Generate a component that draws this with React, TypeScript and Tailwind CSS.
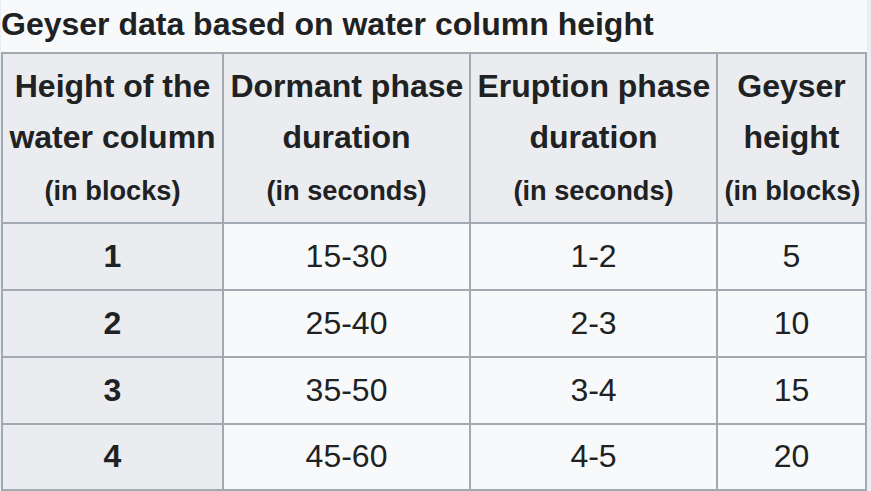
import React from "react";

type Row = { height: string; dormant: string; eruption: string; geyser: string; rowClass: string };

const rows: Row[] = [
  { height: "1", dormant: "15-30", eruption: "1-2", geyser: "5", rowClass: "h-[67px]" },
  { height: "2", dormant: "25-40", eruption: "2-3", geyser: "10", rowClass: "h-[67px]" },
  { height: "3", dormant: "35-50", eruption: "3-4", geyser: "15", rowClass: "h-[66.5px]" },
  { height: "4", dormant: "45-60", eruption: "4-5", geyser: "20", rowClass: "h-[66.5px]" },
];

const cell = "border-2 border-[#a2a9b1] p-[6.4px] text-center";
const head = `${cell} bg-[#eaecf0] font-bold whitespace-nowrap`;

export default function App() {
  return (
    <div className="flex h-[491px] w-[871px] overflow-hidden bg-[#e9f0f5] font-['Liberation_Sans',Arial,sans-serif] text-[#202122]">
      <div className="ml-px w-[866px] bg-[#f8f9fa]">
        <table className="w-[866px] table-fixed border-collapse border-2 border-[#a2a9b1] text-[32px] leading-[1.6]">
          <caption className="pb-[4px] text-left font-bold leading-[48px] whitespace-nowrap">
            Geyser data based on water column height
          </caption>
          <colgroup>
            <col className="w-[221px]" />
            <col className="w-[247px]" />
            <col className="w-[247px]" />
            <col className="w-[149px]" />
          </colgroup>
          <thead>
            <tr className="h-[170px]">
              <th className={head}>
                Height of the
                <br />
                water column
                <br />
                <span className="text-[27.2px]">(in blocks)</span>
              </th>
              <th className={head}>
                Dormant phase
                <br />
                duration
                <br />
                <span className="text-[27.2px]">(in seconds)</span>
              </th>
              <th className={head}>
                Eruption phase
                <br />
                duration
                <br />
                <span className="text-[27.2px]">(in seconds)</span>
              </th>
              <th className={head}>
                Geyser
                <br />
                height
                <br />
                <span className="text-[27.2px]">(in blocks)</span>
              </th>
            </tr>
          </thead>
          <tbody>
            {rows.map((r) => (
              <tr key={r.height} className={r.rowClass}>
                <th scope="row" className={head}>
                  {r.height}
                </th>
                <td className={cell}>{r.dormant}</td>
                <td className={cell}>{r.eruption}</td>
                <td className={cell}>{r.geyser}</td>
              </tr>
            ))}
          </tbody>
        </table>
      </div>
    </div>
  );
}
